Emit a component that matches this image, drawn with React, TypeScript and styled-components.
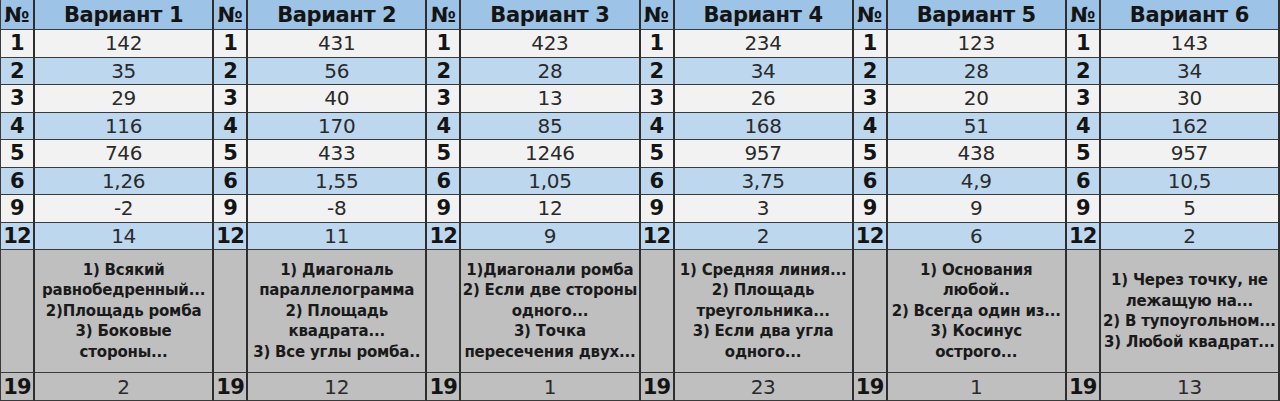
import React from "react";
import styled, { createGlobalStyle } from "styled-components";

const Global = createGlobalStyle`
  html, body { margin: 0; padding: 0; background: #ffffff; }
  body { font-family: "DejaVu Sans", "Liberation Sans", sans-serif; }
`;

type Tone = "head" | "light" | "blue" | "gray";

const bg: Record<Tone, string> = {
  head: "#9dc3e6",
  light: "#f2f2f2",
  blue: "#bdd7ee",
  gray: "#bfbfbf",
};

const Grid = styled.div`
  width: 1280px;
  display: grid;
  grid-template-columns: repeat(6, 34px minmax(0, 1fr));
  grid-template-rows: 30px repeat(8, 27.5px) 123px 28px;
  border-left: 1px solid #3a3a3a;
  box-sizing: border-box;
`;

const Cell = styled.div<{ $tone: Tone }>`
  background: ${(p) => bg[p.$tone]};
  border-right: 2px solid #2e2e2e;
  border-bottom: 1px solid #3a3a3a;
  display: flex;
  align-items: center;
  justify-content: center;
  overflow: hidden;
  color: #1e1e1e;
  box-sizing: border-box;
`;

const NumCell = styled(Cell)`
  font-weight: 700;
  font-size: 21px;
  letter-spacing: -0.8px;
  color: #141414;
`;

const HeadCell = styled(Cell)`
  font-weight: 700;
  font-size: 21px;
  letter-spacing: -0.4px;
  color: #141414;
`;

const NoSign = styled(Cell)`
  font-weight: 700;
  font-size: 21px;
  color: #141414;
`;

const Value = styled(Cell)`
  font-weight: 400;
  font-size: 20px;
  color: #2a2a2a;
  letter-spacing: -0.3px;
`;

const Note = styled(Cell)`
  flex-direction: column;
  font-weight: 700;
  font-size: 15px;
  line-height: 20.5px;
  text-align: center;
  color: #1a1a1a;
  letter-spacing: -0.2px;
`;

const Line = styled.span`
  white-space: nowrap;
  display: block;
`;

type Variant = {
  values: string[];
  note: string[];
  last: string;
};

const rowKeys = ["1", "2", "3", "4", "5", "6", "9", "12"];

const variants: Variant[] = [
  {
    values: ["142", "35", "29", "116", "746", "1,26", "-2", "14"],
    note: ["1) Всякий", "равнобедренный...", "2)Площадь ромба", "3) Боковые", "стороны..."],
    last: "2",
  },
  {
    values: ["431", "56", "40", "170", "433", "1,55", "-8", "11"],
    note: ["1) Диагональ", "параллелограмма", "2) Площадь", "квадрата...", "3) Все углы ромба.."],
    last: "12",
  },
  {
    values: ["423", "28", "13", "85", "1246", "1,05", "12", "9"],
    note: ["1)Диагонали ромба", "2) Если две стороны", "одного...", "3) Точка", "пересечения двух..."],
    last: "1",
  },
  {
    values: ["234", "34", "26", "168", "957", "3,75", "3", "2"],
    note: ["1) Средняя линия...", "2) Площадь", "треугольника...", "3) Если два угла", "одного..."],
    last: "23",
  },
  {
    values: ["123", "28", "20", "51", "438", "4,9", "9", "6"],
    note: ["1) Основания", "любой..", "2) Всегда один из...", "3) Косинус", "острого..."],
    last: "1",
  },
  {
    values: ["143", "34", "30", "162", "957", "10,5", "5", "2"],
    note: ["1) Через точку, не", "лежащую на...", "2) В тупоугольном...", "3) Любой квадрат..."],
    last: "13",
  },
];

export default function App() {
  const cells: React.ReactNode[] = [];
  variants.forEach((_, i) => {
    cells.push(
      <NoSign key={`h-n-${i}`} $tone="head">
        №
      </NoSign>
    );
    cells.push(
      <HeadCell key={`h-v-${i}`} $tone="head">
        Вариант {i + 1}
      </HeadCell>
    );
  });
  rowKeys.forEach((k, r) => {
    const tone: Tone = r % 2 === 0 ? "light" : "blue";
    variants.forEach((v, i) => {
      cells.push(
        <NumCell key={`r${r}-n-${i}`} $tone={tone}>
          {k}
        </NumCell>
      );
      cells.push(
        <Value key={`r${r}-v-${i}`} $tone={tone}>
          {v.values[r]}
        </Value>
      );
    });
  });
  variants.forEach((v, i) => {
    cells.push(<Cell key={`t-n-${i}`} $tone="gray" />);
    cells.push(
      <Note key={`t-v-${i}`} $tone="gray">
        {v.note.map((l, j) => (
          <Line key={j}>{l}</Line>
        ))}
      </Note>
    );
  });
  variants.forEach((v, i) => {
    cells.push(
      <NumCell key={`l-n-${i}`} $tone="gray">
        19
      </NumCell>
    );
    cells.push(
      <Value key={`l-v-${i}`} $tone="gray">
        {v.last}
      </Value>
    );
  });
  return (
    <>
      <Global />
      <Grid>{cells}</Grid>
    </>
  );
}
